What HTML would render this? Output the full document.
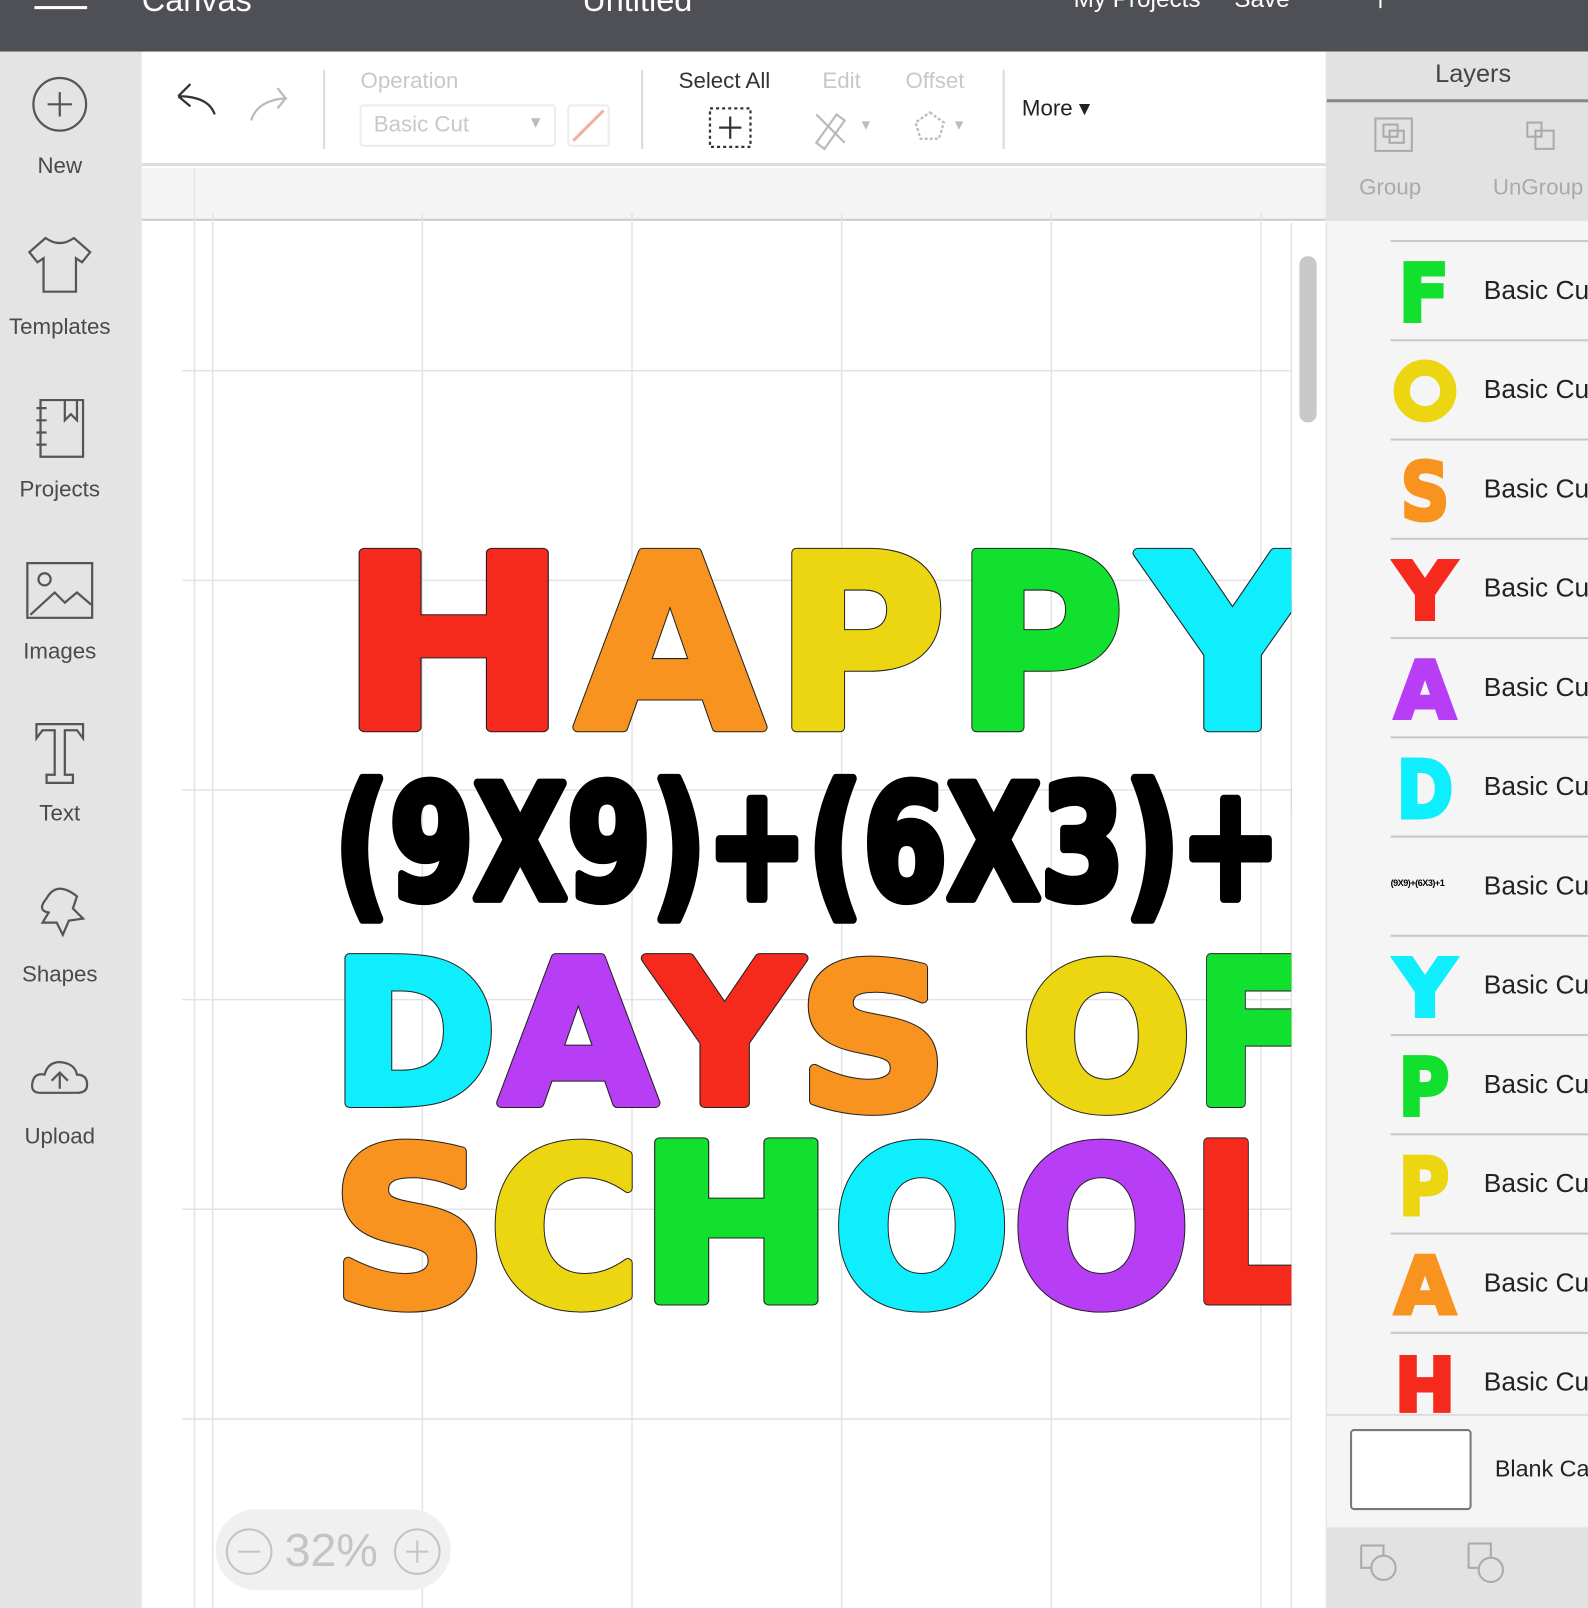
<!DOCTYPE html>
<html><head><meta charset="utf-8"><style>
*{margin:0;padding:0;box-sizing:border-box}
body{width:1588px;height:1588px;overflow:hidden;background:#fff;font-family:"Liberation Sans",sans-serif;position:relative}
#w{position:absolute;left:0;top:0;width:1568px;height:1568px;transform:scale(1.0128);transform-origin:0 0}
.abs{position:absolute}
.top{left:0;top:0;width:1600px;height:51px;background:#4f5055;color:#fff}
.side{left:0;top:51px;width:140px;height:1537px;background:#e4e4e4}
.lbl{position:absolute;left:0;width:118px;text-align:center;font-size:22px;color:#4a4a4a}
.tb{left:140px;top:51px;width:1169px;height:113px;background:#fff;border-bottom:3px solid #ddd}
.ruler{left:140px;top:166px;width:1169px;height:52px;background:#f4f4f4;border-bottom:2px solid #ccc}
.rp{left:1309px;top:51px;width:279px;height:1537px;background:#f5f5f5;border-left:1px solid #ddd}
.row{position:absolute;left:1373px;width:215px;height:98px;border-top:2px solid #c8c8c8}
.row span{position:absolute;left:92px;top:32px;font-size:26px;color:#222}
</style></head><body><div id="w">
<div class="abs top">
 <div class="abs" style="left:34px;top:6px;width:52px;height:3px;background:#fff"></div>
 <div class="abs" style="left:140px;top:-18px;font-size:32px">Canvas</div>
 <div class="abs" style="left:575px;top:-18px;font-size:32px">Untitled</div>
 <div class="abs" style="left:1060px;top:-14px;font-size:24px">My Projects &nbsp;&nbsp;&nbsp; Save</div>
 <div class="abs" style="left:1362px;top:0;width:2px;height:8px;background:#fff"></div>
</div>
<div class="abs side">
 <svg class="abs" style="left:0;top:0" width="140" height="1537" fill="none" stroke="#555" stroke-width="2.2">
  <circle cx="59" cy="52" r="26"/><path d="M59 40v24M47 52h24"/>
  <path d="M45 184l-16 14 8 10 6-4v33h32v-33l6 4 8-10-16-14q-14 10-28 0z"/>
  <path d="M40 344h42v56H40zM36 352h10M36 364h10M36 376h10M36 388h10M64 344v20l6-6 6 6v-20"/>
  <path d="M27 505h64v54H27zM30 556l24-22 10 10 12-10 14 12"/><circle cx="44" cy="521" r="6"/>
  <path d="M36 664h46v14l-6-8H64v44h8v8H46v-8h8v-44H42l-6 8z"/>
  <path d="M46 836q10-18 30-2l-4 12 10 10-14 2-6 14-6-12-14 0 6-10q-12-2-2-14z"/>
  <path d="M40 1028q-10 0-8-10 2-10 12-8 4-14 18-12 12 2 14 12 10 0 10 10 0 8-10 8zM59 1024v-16M51 1016l8-8 8 8"/>
 </svg>
 <div class="lbl" style="top:100px">New</div>
 <div class="lbl" style="top:259px">Templates</div>
 <div class="lbl" style="top:419px">Projects</div>
 <div class="lbl" style="top:579px">Images</div>
 <div class="lbl" style="top:739px">Text</div>
 <div class="lbl" style="top:898px">Shapes</div>
 <div class="lbl" style="top:1058px">Upload</div>
</div>
<div class="abs tb">
 <svg class="abs" style="left:0;top:0" width="1169" height="113" fill="none" stroke-width="2.2">
  <path d="M72 62q-6-18-36-18M36 44l12-12M36 44l12 10" stroke="#333"/>
  <path d="M108 68q6-20 34-22l-8-10M142 46l-8 10" stroke="#bbb"/>
  <line x1="180" y1="18" x2="180" y2="96" stroke="#ddd"/>
  <line x1="494" y1="18" x2="494" y2="96" stroke="#ddd"/>
  <line x1="851" y1="18" x2="851" y2="96" stroke="#ddd"/>
  <rect x="216" y="53" width="192" height="40" rx="3" stroke="#eee"/>
  <rect x="421" y="53" width="40" height="40" rx="3" stroke="#eee"/>
  <path d="M426 88l30-30" stroke="#f0b0a0" stroke-width="3"/>
  <rect x="561" y="56" width="40" height="38" stroke="#333" stroke-dasharray="3 3"/><path d="M581 64v22M570 75h22" stroke="#333"/>
  <path d="M666 90l20-28 8 6-20 28zM666 62l28 28" stroke="#bbb"/>
  <path d="M778 60l14 10-5 16h-18l-5-16z" stroke="#bbb" stroke-dasharray="3 2"/>
 </svg>
 <div class="abs" style="left:216px;top:16px;font-size:22px;color:#c8c8c8">Operation</div>
 <div class="abs" style="left:229px;top:59px;font-size:22px;color:#c8c8c8">Basic Cut</div>
 <div class="abs" style="left:381px;top:62px;font-size:16px;color:#bbb">▼</div>
 <div class="abs" style="left:530px;top:16px;font-size:22px;color:#333">Select All</div>
 <div class="abs" style="left:672px;top:16px;font-size:22px;color:#c8c8c8">Edit</div>
 <div class="abs" style="left:754px;top:16px;font-size:22px;color:#c8c8c8">Offset</div>
 <div class="abs" style="left:708px;top:64px;font-size:14px;color:#bbb">▼</div>
 <div class="abs" style="left:800px;top:64px;font-size:14px;color:#bbb">▼</div>
 <div class="abs" style="left:869px;top:43px;font-size:22px;color:#222">More ▾</div>
</div>
<div class="abs ruler"></div>
<svg class="abs" style="left:140px;top:166px" width="1169" height="1422">
 <g stroke="#e3e3e3" stroke-width="1.5">
  <line x1="52" y1="0" x2="52" y2="1422"/>
  <line x1="70" y1="44" x2="70" y2="1422"/><line x1="277" y1="44" x2="277" y2="1422"/><line x1="484" y1="44" x2="484" y2="1422"/><line x1="691" y1="44" x2="691" y2="1422"/><line x1="898" y1="44" x2="898" y2="1422"/><line x1="1105" y1="44" x2="1105" y2="1422"/><line x1="1135" y1="54" x2="1135" y2="1422"/>
  <line x1="40" y1="200" x2="1135" y2="200"/><line x1="40" y1="407" x2="1135" y2="407"/><line x1="40" y1="614" x2="1135" y2="614"/><line x1="40" y1="821" x2="1135" y2="821"/><line x1="40" y1="1028" x2="1135" y2="1028"/><line x1="40" y1="1235" x2="1135" y2="1235"/>
 </g>
 <rect x="1143" y="87" width="17" height="164" rx="8" fill="#c8c8c8"/>
</svg>
<svg class="abs" style="left:0;top:0" width="1275" height="1588" font-family="DejaVu Sans,sans-serif" font-weight="bold" stroke-linejoin="round">
 <defs>
 <g id="L">
 <g font-size="236">
  <text x="335" y="718" textLength="226" lengthAdjust="spacingAndGlyphs" fill="#f52a1c">H</text>
  <text x="569" y="718" textLength="185" lengthAdjust="spacingAndGlyphs" fill="#f7931e">A</text>
  <text x="765" y="718" textLength="169" lengthAdjust="spacingAndGlyphs" fill="#ebd611">P</text>
  <text x="943" y="718" textLength="167" lengthAdjust="spacingAndGlyphs" fill="#12e02e">P</text>
  <text x="1126" y="718" textLength="182" lengthAdjust="spacingAndGlyphs" fill="#0eeefc">Y</text>
 </g>
 <g font-size="196">
  <text x="327" y="1089" textLength="164" lengthAdjust="spacingAndGlyphs" fill="#0eeefc">D</text>
  <text x="494" y="1089" textLength="154" lengthAdjust="spacingAndGlyphs" fill="#b73ef5">A</text>
  <text x="640" y="1089" textLength="151" lengthAdjust="spacingAndGlyphs" fill="#f52a1c">Y</text>
  <text x="788" y="1094" textLength="148" lengthAdjust="spacingAndGlyphs" fill="#f7931e">S</text>
  <text x="1008" y="1094" textLength="169" lengthAdjust="spacingAndGlyphs" fill="#ebd611">O</text>
  <text x="1180" y="1089" textLength="112" lengthAdjust="spacingAndGlyphs" fill="#12e02e">F</text>
 </g>
 <g font-size="214">
  <text x="327" y="1288" textLength="155" lengthAdjust="spacingAndGlyphs" fill="#f7931e">S</text>
  <text x="483" y="1288" textLength="150" lengthAdjust="spacingAndGlyphs" fill="#ebd611">C</text>
  <text x="630" y="1284" textLength="194" lengthAdjust="spacingAndGlyphs" fill="#12e02e">H</text>
  <text x="822" y="1288" textLength="176" lengthAdjust="spacingAndGlyphs" fill="#0eeefc">O</text>
  <text x="999" y="1288" textLength="177" lengthAdjust="spacingAndGlyphs" fill="#b73ef5">O</text>
  <text x="1175" y="1284" textLength="122" lengthAdjust="spacingAndGlyphs" fill="#f52a1c">L</text>
 </g>
 </g>
 </defs>
 <use href="#L" stroke="#222" stroke-width="10"/>
 <g font-size="236" stroke-width="8">
  <text x="335" y="718" textLength="226" lengthAdjust="spacingAndGlyphs" fill="#f52a1c" stroke="#f52a1c">H</text>
  <text x="569" y="718" textLength="185" lengthAdjust="spacingAndGlyphs" fill="#f7931e" stroke="#f7931e">A</text>
  <text x="765" y="718" textLength="169" lengthAdjust="spacingAndGlyphs" fill="#ebd611" stroke="#ebd611">P</text>
  <text x="943" y="718" textLength="167" lengthAdjust="spacingAndGlyphs" fill="#12e02e" stroke="#12e02e">P</text>
  <text x="1126" y="718" textLength="182" lengthAdjust="spacingAndGlyphs" fill="#0eeefc" stroke="#0eeefc">Y</text>
 </g>
 <g font-size="196" stroke-width="8">
  <text x="327" y="1089" textLength="164" lengthAdjust="spacingAndGlyphs" fill="#0eeefc" stroke="#0eeefc">D</text>
  <text x="494" y="1089" textLength="154" lengthAdjust="spacingAndGlyphs" fill="#b73ef5" stroke="#b73ef5">A</text>
  <text x="640" y="1089" textLength="151" lengthAdjust="spacingAndGlyphs" fill="#f52a1c" stroke="#f52a1c">Y</text>
  <text x="788" y="1094" textLength="148" lengthAdjust="spacingAndGlyphs" fill="#f7931e" stroke="#f7931e">S</text>
  <text x="1008" y="1094" textLength="169" lengthAdjust="spacingAndGlyphs" fill="#ebd611" stroke="#ebd611">O</text>
  <text x="1180" y="1089" textLength="112" lengthAdjust="spacingAndGlyphs" fill="#12e02e" stroke="#12e02e">F</text>
 </g>
 <g font-size="214" stroke-width="8">
  <text x="327" y="1288" textLength="155" lengthAdjust="spacingAndGlyphs" fill="#f7931e" stroke="#f7931e">S</text>
  <text x="483" y="1288" textLength="150" lengthAdjust="spacingAndGlyphs" fill="#ebd611" stroke="#ebd611">C</text>
  <text x="630" y="1284" textLength="194" lengthAdjust="spacingAndGlyphs" fill="#12e02e" stroke="#12e02e">H</text>
  <text x="822" y="1288" textLength="176" lengthAdjust="spacingAndGlyphs" fill="#0eeefc" stroke="#0eeefc">O</text>
  <text x="999" y="1288" textLength="177" lengthAdjust="spacingAndGlyphs" fill="#b73ef5" stroke="#b73ef5">O</text>
  <text x="1175" y="1284" textLength="122" lengthAdjust="spacingAndGlyphs" fill="#f52a1c" stroke="#f52a1c">L</text>
 </g>
 <text x="330" y="887" font-size="156" textLength="935" lengthAdjust="spacingAndGlyphs" fill="#000" stroke="#000" stroke-width="9">(9X9)+(6X3)+</text>
 <text x="1262" y="887" font-size="156" fill="#000" stroke="#000" stroke-width="9">1</text>
</svg>
<div class="abs" style="left:213px;top:1490px;width:232px;height:80px;border-radius:40px;background:#f0f0f0"></div>
<svg class="abs" style="left:213px;top:1490px" width="232" height="80" fill="none" stroke="#c4c4c4" stroke-width="2">
 <circle cx="33" cy="42" r="22"/><path d="M22 42h22"/><circle cx="199" cy="42" r="22"/><path d="M188 42h22M199 31v22"/>
</svg>
<div class="abs" style="left:281px;top:1503px;font-size:46px;color:#c4c4c4">32%</div>
<div class="abs rp">
 <div class="abs" style="left:0;top:0;width:279px;height:167px;background:#e2e2e2"></div>
 <div class="abs" style="left:0;top:47px;width:279px;height:3px;background:#888"></div>
 <div class="abs" style="left:107px;top:8px;font-size:25px;color:#444">Layers</div>
 <svg class="abs" style="left:0;top:60px" width="279" height="50" fill="none" stroke="#aaa" stroke-width="2">
  <rect x="48" y="6" width="36" height="32"/><rect x="56" y="12" width="14" height="12"/><rect x="62" y="18" width="14" height="12"/>
  <rect x="198" y="10" width="14" height="14"/><rect x="206" y="18" width="18" height="18"/>
 </svg>
 <div class="abs" style="left:32px;top:121px;font-size:22px;color:#aaa">Group</div>
 <div class="abs" style="left:164px;top:121px;font-size:22px;color:#aaa">UnGroup</div>
 <div class="abs" style="left:0;top:1345px;width:279px;height:192px;background:#f5f5f5;border-top:2px solid #ddd"></div>
 <div class="abs" style="left:23px;top:1360px;width:120px;height:80px;border:2px solid #777;border-radius:4px;background:#fff"></div>
 <div class="abs" style="left:166px;top:1386px;font-size:23px;color:#222">Blank Ca</div>
 <div class="abs" style="left:0;top:1457px;width:279px;height:80px;background:#e2e2e2"></div>
 <svg class="abs" style="left:0;top:1457px" width="279" height="80" fill="none" stroke="#aaa" stroke-width="2">
  <path d="M34 18h22v10M34 18v22h10"/><circle cx="56" cy="40" r="12"/><path d="M140 16h22v14M140 16v24h10"/><circle cx="162" cy="42" r="12"/>
 </svg>
</div>
<div class="row" style="top:237px"><svg class="abs" style="left:0;top:14px" width="70" height="70" font-family="DejaVu Sans" font-weight="bold" font-size="78"><text x="8" y="64" textLength="50" lengthAdjust="spacingAndGlyphs" fill="#12e02e" stroke="#12e02e" stroke-width="4">F</text></svg><span>Basic Cu</span></div>
<div class="row" style="top:335px"><svg class="abs" style="left:0;top:14px" width="70" height="70"><circle cx="34" cy="35" r="23" fill="none" stroke="#ebd611" stroke-width="16"/></svg><span>Basic Cu</span></div>
<div class="row" style="top:433px"><svg class="abs" style="left:0;top:14px" width="70" height="70" font-family="DejaVu Sans" font-weight="bold" font-size="78"><text x="10" y="64" textLength="48" lengthAdjust="spacingAndGlyphs" fill="#f7931e" stroke="#f7931e" stroke-width="4">S</text></svg><span>Basic Cu</span></div>
<div class="row" style="top:531px"><svg class="abs" style="left:0;top:14px" width="70" height="70" font-family="DejaVu Sans" font-weight="bold" font-size="78"><text x="4" y="64" textLength="60" lengthAdjust="spacingAndGlyphs" fill="#f52a1c" stroke="#f52a1c" stroke-width="4">Y</text></svg><span>Basic Cu</span></div>
<div class="row" style="top:629px"><svg class="abs" style="left:0;top:14px" width="70" height="70" font-family="DejaVu Sans" font-weight="bold" font-size="78"><text x="4" y="64" textLength="60" lengthAdjust="spacingAndGlyphs" fill="#b73ef5" stroke="#b73ef5" stroke-width="4">A</text></svg><span>Basic Cu</span></div>
<div class="row" style="top:727px"><svg class="abs" style="left:0;top:14px" width="70" height="70" font-family="DejaVu Sans" font-weight="bold" font-size="78"><text x="6" y="64" textLength="56" lengthAdjust="spacingAndGlyphs" fill="#0eeefc" stroke="#0eeefc" stroke-width="4">D</text></svg><span>Basic Cu</span></div>
<div class="row" style="top:825px"><div class="abs" style="left:0;top:40px;font-size:9px;font-weight:bold;color:#000;letter-spacing:-0.5px">(9X9)+(6X3)+1</div><span>Basic Cu</span></div>
<div class="row" style="top:923px"><svg class="abs" style="left:0;top:14px" width="70" height="70" font-family="DejaVu Sans" font-weight="bold" font-size="78"><text x="4" y="64" textLength="60" lengthAdjust="spacingAndGlyphs" fill="#0eeefc" stroke="#0eeefc" stroke-width="4">Y</text></svg><span>Basic Cu</span></div>
<div class="row" style="top:1021px"><svg class="abs" style="left:0;top:14px" width="70" height="70" font-family="DejaVu Sans" font-weight="bold" font-size="78"><text x="8" y="64" textLength="50" lengthAdjust="spacingAndGlyphs" fill="#12e02e" stroke="#12e02e" stroke-width="4">P</text></svg><span>Basic Cu</span></div>
<div class="row" style="top:1119px"><svg class="abs" style="left:0;top:14px" width="70" height="70" font-family="DejaVu Sans" font-weight="bold" font-size="78"><text x="8" y="64" textLength="50" lengthAdjust="spacingAndGlyphs" fill="#ebd611" stroke="#ebd611" stroke-width="4">P</text></svg><span>Basic Cu</span></div>
<div class="row" style="top:1217px"><svg class="abs" style="left:0;top:14px" width="70" height="70" font-family="DejaVu Sans" font-weight="bold" font-size="78"><text x="4" y="64" textLength="60" lengthAdjust="spacingAndGlyphs" fill="#f7931e" stroke="#f7931e" stroke-width="4">A</text></svg><span>Basic Cu</span></div>
<div class="row" style="top:1315px;height:80px;overflow:hidden"><svg class="abs" style="left:0;top:14px" width="70" height="70" font-family="DejaVu Sans" font-weight="bold" font-size="78"><text x="4" y="66" textLength="60" lengthAdjust="spacingAndGlyphs" fill="#f52a1c" stroke="#f52a1c" stroke-width="4">H</text></svg><span>Basic Cu</span></div>
</div></body></html>
